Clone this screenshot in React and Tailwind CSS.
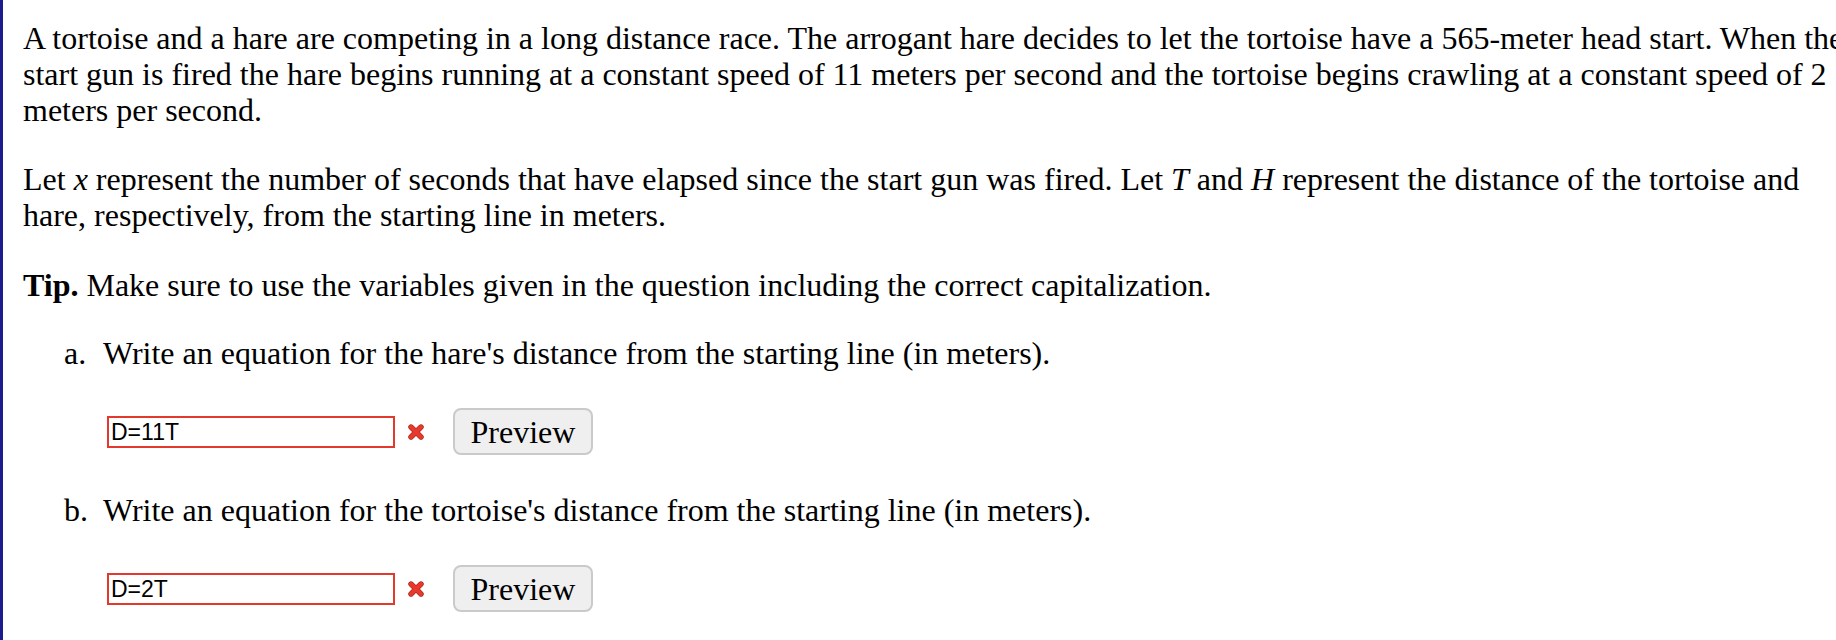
function XMark() {
  return (
    <svg width="16" height="16" viewBox="0 0 16 16" className="shrink-0">
      <path d="M3 3 L13 13 M13 3 L3 13" stroke="#a3261c" strokeWidth="5.4" strokeLinecap="round" />
      <path d="M3 3 L13 13 M13 3 L3 13" stroke="#e8392c" strokeWidth="4.2" strokeLinecap="round" />
    </svg>
  );
}

function AnswerRow({ value }) {
  return (
    <div className="ml-[4px] mt-[37px] mb-[37px] flex h-[47px] items-center">
      <input
        readOnly
        value={value}
        className="h-[32px] w-[288px] border-2 border-[#e3392d] bg-white pl-[2px] pt-[2px] font-['Liberation_Sans',Arial,sans-serif] text-[23px] leading-none text-black outline-none"
      />
      <div className="ml-[13px] flex w-[16px] items-center">
        <XMark />
      </div>
      <button className="ml-[29px] h-[47px] w-[140px] rounded-[8px] border-2 border-[#cacaca] bg-[#efefef] font-['Liberation_Serif',serif] text-[32px] leading-none text-black">
        Preview
      </button>
    </div>
  );
}

function Part({ label, children }) {
  return (
    <li className="flex">
      <span className="w-[21px] shrink-0 text-right">{label}</span>
      <div className="ml-[18px]">{children}</div>
    </li>
  );
}

export default function App() {
  return (
    <div className="h-[640px] w-[1836px] overflow-hidden border-l-[3px] border-[#1b1b8e] bg-white">
      <div className="w-[1843px] pl-[20px] pt-[20px] font-['Liberation_Serif','Times_New_Roman',serif] text-[32px] leading-[36px] text-black">
        <p className="mb-[33px]">
          A tortoise and a hare are competing in a long distance race. The arrogant hare decides to let the tortoise have a 565-meter head start. When the start gun is fired the hare begins running at a constant speed of 11 meters per second and the tortoise begins crawling at a constant speed of 2 meters per second.
        </p>
        <p className="mb-[34px]">
          Let <i>x</i> represent the number of seconds that have elapsed since the start gun was fired. Let <i>T</i> and <i>H</i> represent the distance of the tortoise and hare, respectively, from the starting line in meters.
        </p>
        <p>
          <b>Tip.</b> Make sure to use the variables given in the question including the correct capitalization.
        </p>
        <ol className="mt-[32px] pl-[41px]">
          <Part label="a.">
            Write an equation for the hare's distance from the starting line (in meters).
            <AnswerRow value="D=11T" />
          </Part>
          <Part label="b.">
            Write an equation for the tortoise's distance from the starting line (in meters).
            <AnswerRow value="D=2T" />
          </Part>
        </ol>
      </div>
    </div>
  );
}
